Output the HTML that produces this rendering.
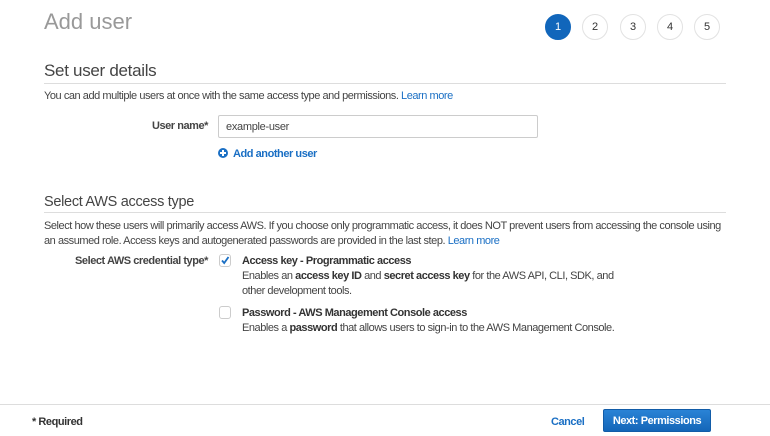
<!DOCTYPE html>
<html><head><meta charset="utf-8"><style>
*{margin:0;padding:0;box-sizing:border-box}
body{width:770px;height:436px;background:#fff;font-family:"Liberation Sans",sans-serif;color:#444;position:relative;overflow:hidden}
.a{position:absolute;white-space:nowrap}
.c{position:absolute;top:14px;width:26px;height:26px;border-radius:50%;border:1px solid #e2e2e2;font-size:11px;text-align:center;line-height:24px;color:#333}
.s{font-size:11px;letter-spacing:-0.45px}
a{color:#1a6fc4;text-decoration:none}
b{color:#333}
</style></head><body>
<div class="a" style="left:44px;top:9px;font-size:22px;color:#999">Add user</div>
<div class="c" style="left:545px;background:#1166bb;border-color:#1166bb;color:#fff">1</div>
<div class="c" style="left:582px">2</div>
<div class="c" style="left:620px">3</div>
<div class="c" style="left:657px">4</div>
<div class="c" style="left:694px">5</div>

<div class="a" style="left:44px;top:61px;font-size:17px;color:#444;letter-spacing:-0.3px">Set user details</div>
<div class="a" style="left:44px;top:83px;width:682px;height:1px;background:#ddd"></div>
<div class="a s" style="left:44px;top:90px">You can add multiple users at once with the same access type and permissions. <a>Learn more</a></div>
<div class="a s" style="right:562px;top:120px;font-weight:bold;color:#444">User name*</div>
<div class="a" style="left:218px;top:115px;width:320px;height:23px;border:1px solid #ccc;border-radius:2px;font-size:11px;padding:5px 7px;color:#444;letter-spacing:-0.3px">example-user</div>
<div class="a" style="left:218px;top:148px;width:10px;height:10px;border-radius:50%;background:#1a6fc4"></div>
<div class="a" style="left:220px;top:152px;width:6px;height:2px;background:#fff"></div>
<div class="a" style="left:222px;top:150px;width:2px;height:6px;background:#fff"></div>
<div class="a s" style="left:233px;top:148px;font-weight:bold;color:#1a6fc4">Add another user</div>

<div class="a" style="left:44px;top:194px;font-size:14.5px;letter-spacing:-0.3px">Select AWS access type</div>
<div class="a" style="left:44px;top:212px;width:682px;height:1px;background:#ddd"></div>
<div class="a s" style="left:44px;top:220px">Select how these users will primarily access AWS. If you choose only programmatic access, it does NOT prevent users from accessing the console using</div>
<div class="a s" style="left:44px;top:235px">an assumed role. Access keys and autogenerated passwords are provided in the last step. <a>Learn more</a></div>
<div class="a s" style="right:562px;top:255px;font-weight:bold">Select AWS credential type*</div>
<div class="a" style="left:219px;top:254px;width:12px;height:13px;border:1px solid #ccc;border-radius:3px"></div>
<svg class="a" style="left:220px;top:255px" width="10" height="10"><path d="M2 5.5 L4.2 8 L8.5 2" stroke="#1a6fc4" stroke-width="1.8" fill="none"/></svg>
<div class="a s" style="left:242px;top:255px;font-weight:bold;color:#333">Access key - Programmatic access</div>
<div class="a s" style="left:242px;top:270px">Enables an <b>access key ID</b> and <b>secret access key</b> for the AWS API, CLI, SDK, and</div>
<div class="a s" style="left:242px;top:285px">other development tools.</div>
<div class="a" style="left:219px;top:306px;width:12px;height:13px;border:1px solid #ccc;border-radius:3px"></div>
<div class="a s" style="left:242px;top:307px;font-weight:bold;color:#333">Password - AWS Management Console access</div>
<div class="a s" style="left:242px;top:322px">Enables a <b>password</b> that allows users to sign-in to the AWS Management Console.</div>

<div class="a" style="left:0;top:404px;width:770px;height:1px;background:#ddd"></div>
<div class="a s" style="left:32px;top:416px;font-weight:bold;color:#333">* Required</div>
<div class="a s" style="left:551px;top:416px;font-weight:bold;color:#1a6fc4">Cancel</div>
<div class="a s" style="left:603px;top:409px;width:108px;height:23px;border-radius:2px;background:linear-gradient(#2a83d6,#1466b8);border:1px solid #125ca8;color:#fff;font-weight:bold;text-align:center;line-height:22px">Next: Permissions</div>
</body></html>
